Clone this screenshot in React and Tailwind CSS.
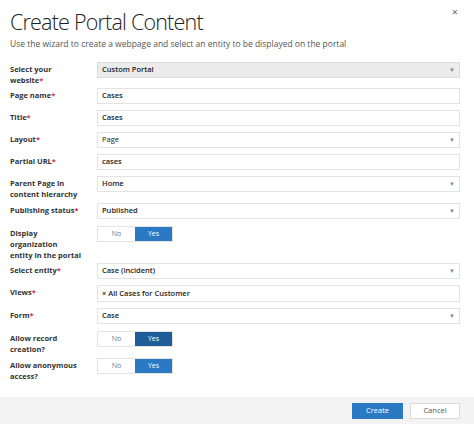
import React from "react";

const font = { fontFamily: '"Open Sans", "Noto Sans", sans-serif' };

function Label({ text, required }) {
  return (
    <div className="w-[87px] shrink-0 pt-[2px] pr-2 text-[7.5px] font-bold leading-[11px] text-[#333]">
      {text}
      {required && <span className="text-[#d0334e]">*</span>}
    </div>
  );
}

function Arrow() {
  return <span className="ml-auto text-[6px] text-[#888]">▼</span>;
}

function Field({ value, select, disabled, bold = true, tall }) {
  return (
    <div
      className={`flex ${tall ? "h-[17px]" : "h-[16px]"} flex-1 items-center border px-[4px] text-[7.5px] text-[#222] ${
        disabled ? "border-[#dcdcdc] bg-[#ececec]" : "border-[#e3e3e3] bg-white"
      } ${bold ? "font-semibold" : "font-normal"}`}
    >
      <span>{value}</span>
      {select && <Arrow />}
    </div>
  );
}

function Toggle({ dark }) {
  return (
    <div className="flex h-[16px] w-[76px] border border-[#e3e3e3] text-[7px]">
      <div className="flex flex-1 items-center justify-center bg-white text-[#777]">No</div>
      <div
        className={`flex flex-1 items-center justify-center text-white ${
          dark ? "bg-[#1f5d99]" : "bg-[#2b79c2]"
        }`}
      >
        Yes
      </div>
    </div>
  );
}

function Row({ h, children }) {
  return <div className={`flex items-start ${h}`}>{children}</div>;
}

export default function App() {
  return (
    <div className="relative h-[426px] w-[474px] overflow-hidden bg-white" style={font}>
      <button className="absolute right-[16px] top-[4px] text-[11px] text-[#666]">×</button>

      <div className="px-[10px] pt-[6px]">
        <h1 className="text-[21.5px] font-light leading-[31px] tracking-[-0.8px] text-[#222]">Create Portal Content</h1>
        <p className="mt-[1px] text-[8.5px] leading-[12px] text-[#555]">
          Use the wizard to create a webpage and select an entity to be displayed on the portal
        </p>

        <div className="mt-[12px] pr-[4px]">
          <Row h="h-[26px]">
            <Label text={<>Select your<br />website</>} required />
            <Field value="Custom Portal" select disabled />
          </Row>
          <Row h="h-[22px]">
            <Label text="Page name" required />
            <Field value="Cases" />
          </Row>
          <Row h="h-[22px]">
            <Label text="Title" required />
            <Field value="Cases" />
          </Row>
          <Row h="h-[22px]">
            <Label text="Layout" required />
            <Field value="Page" select bold={false} />
          </Row>
          <Row h="h-[22px]">
            <Label text="Partial URL" required />
            <Field value="cases" />
          </Row>
          <Row h="h-[27px]">
            <Label text={<>Parent Page in<br />content hierarchy</>} />
            <Field value="Home" select />
          </Row>
          <Row h="h-[23px]">
            <Label text="Publishing status" required />
            <Field value="Published" select />
          </Row>
          <Row h="h-[37px]">
            <Label text={<>Display<br />organization<br />entity in the portal</>} />
            <Toggle />
          </Row>
          <Row h="h-[22px]">
            <Label text="Select entity" required />
            <Field value="Case (incident)" select />
          </Row>
          <Row h="h-[23px]">
            <Label text="Views" required />
            <Field value="× All Cases for Customer" tall />
          </Row>
          <Row h="h-[23px]">
            <Label text="Form" required />
            <Field value="Case" select />
          </Row>
          <Row h="h-[27px]">
            <Label text={<>Allow record<br />creation?</>} />
            <Toggle dark />
          </Row>
          <Row h="h-[39px]">
            <Label text={<>Allow anonymous<br />access?</>} />
            <Toggle />
          </Row>
        </div>
      </div>

      <div className="flex h-[27px] items-center justify-end gap-[7px] bg-[#f3f3f3] pr-[14px]">
        <button className="h-[16px] w-[51px] bg-[#2b79c2] text-[7.5px] text-white">Create</button>
        <button className="h-[16px] w-[50px] border border-[#dcdcdc] bg-white text-[7.5px] text-[#555]">
          Cancel
        </button>
      </div>
    </div>
  );
}
